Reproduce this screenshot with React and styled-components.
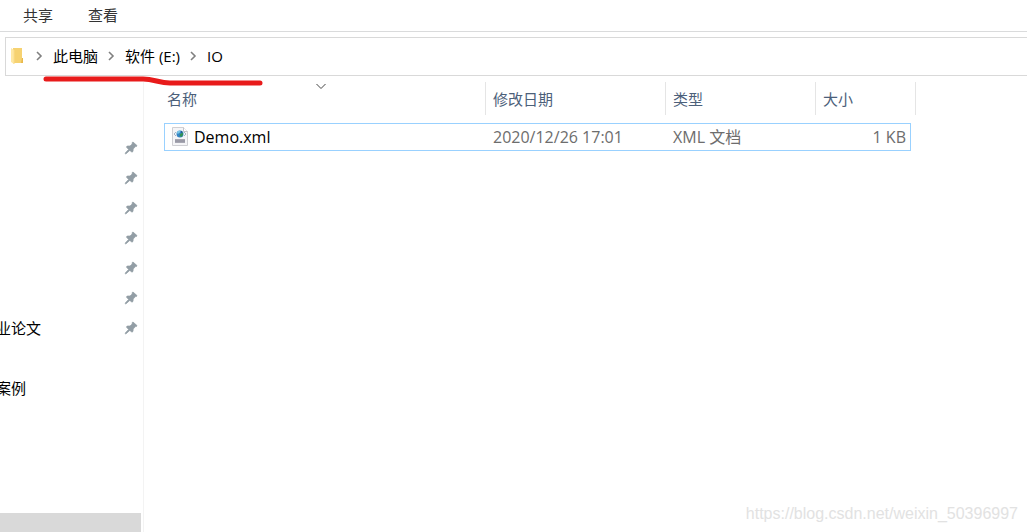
import React from 'react'
import styled, { createGlobalStyle } from 'styled-components'

const GlobalStyle = createGlobalStyle`
    * {
        box-sizing: border-box;
    }

    body {
        margin: 0;
        overflow: hidden;
        background-color: #fff;
        color: #000;
        font-family: "Open Sans", "Noto Sans CJK SC", sans-serif;
        font-size: 15px;
        line-height: 20px;
    }

    button {
        padding: 0;
        border: 0;
        background: none;
        color: inherit;
        font: inherit;
        cursor: pointer;
    }
`;

const Window = styled.div`
    position: relative;
    min-height: 100vh;
    display: flex;
    flex-direction: column;
`;

const Tabs = styled.nav`
    height: 32px;
    padding: 0 23px 2px;
    display: flex;
    align-items: center;
    gap: 35px;
    border-bottom: 1px solid #dadbdc;
    color: #333;
`;

const AddressBar = styled.nav`
    height: 39px;
    margin: 5px 0 0 5px;
    padding: 0 0 2px 4px;
    display: flex;
    align-items: center;
    border: 1px solid #d9d9d9;
    border-right: 0;
`;

const Crumb = styled.span`
    display: flex;
    align-items: center;

    svg {
        margin: 0 10px 0 9px;
    }
`;

const FolderIcon = styled.svg`
    margin-right: 2px;
`;

const Body = styled.div`
    flex: 1;
    display: flex;
    padding-top: 6px;
`;

const Sidebar = styled.aside`
    flex: none;
    width: 144px;
    padding: 51px 2px 0 0;
    display: flex;
    flex-direction: column;
    justify-content: space-between;
    border-right: 1px solid #f3f3f3;
    overflow: hidden;
`;

const PlaceList = styled.ul`
    margin: 0;
    padding: 0;
    list-style: none;
`;

const Place = styled.li`
    height: 30px;
    margin-left: -4px;
    padding-right: 3px;
    display: flex;
    align-items: center;
    justify-content: space-between;
    white-space: nowrap;
`;

const ScrollThumb = styled.div`
    height: 19px;
    background-color: #d9d9d9;
`;

const Files = styled.main`
    flex: 1;
    min-width: 0;
    padding-left: 20px;
`;

const FileTable = styled.table`
    display: block;
    width: 100%;
    max-width: 752px;
`;

const TableHead = styled.thead`
    display: block;
`;

const TableBody = styled.tbody`
    display: block;
    padding: 8px 5px 0 0;
`;

const HeadRow = styled.tr`
    display: grid;
    grid-template-columns: minmax(0, 1fr) 180px 150px 100px;
`;

const HeadCell = styled.th`
    position: relative;
    height: 33px;
    padding: 0 0 0 ${props => props.$first ? '3px' : '7px'};
    display: flex;
    align-items: center;
    border-right: 1px solid #e5e5e5;
    color: #4c607a;
    font-weight: 400;
`;

const SortArrow = styled.svg`
    position: absolute;
    top: 1px;
    left: 49%;
    transform: translateX(-50%);
`;

const FileRow = styled.tr`
    height: 28px;
    display: grid;
    grid-template-columns: minmax(0, 1fr) 180px 150px 94px;
    align-items: center;
    border: 1px solid #99d1ff;
`;

const Cell = styled.td`
    padding: 0 4px 0 7px;
    color: #6d6d6d;
    font-size: 16px;
    text-align: ${props => props.$align || 'left'};
    white-space: nowrap;
`;

const NameCell = styled(Cell)`
    display: flex;
    align-items: center;
    gap: 6px;
    padding-left: 6px;
    color: #000;
`;

const Marker = styled.svg`
    position: absolute;
    top: 74px;
    left: 42px;
    pointer-events: none;
`;

const Watermark = styled.div`
    position: absolute;
    right: 9px;
    bottom: 8px;
    color: #e2e2e2;
    font-family: "Liberation Sans", sans-serif;
    font-size: 16px;
`;

function Chevron() {
    return <svg width="8" height="10" viewBox="0 0 8 10" fill="none" stroke="#808080" strokeWidth="1.6">
        <path d="M2 1L6 5L2 9" />
    </svg>
}

function Folder() {
    return <FolderIcon width="14" height="18" viewBox="0 0 14 18">
        <path d="M3 1H12V11H13V16H3Z" fill="#f6d271" />
        <path d="M12 11H13V16H11Z" fill="#e8b84c" />
        <path d="M1 1L4 3V17L1 15Z" fill="#ffe8a3" />
        <path d="M4 3V17" stroke="#f9dc8a" />
    </FolderIcon>
}

function Pin() {
    return <svg width="14" height="14" viewBox="0 0 14 14">
        <path
            d="M9 1L13 4.6L12.5 5.5L11.4 5.6L9.2 8L9 10.4L8 11.2L5.8 9.4L1.8 13L1 12.3L4.6 8.4L2.4 6.1L3.2 5L6 5L8.2 3L8.2 1.5Z"
            fill="#929da5"
            stroke="#929da5"
            strokeWidth=".7"
            strokeLinejoin="round"
        />
    </svg>
}

function XmlFile() {
    return <svg width="17" height="20" viewBox="0 0 17 20">
        <path d="M1.5 .5H12.5L16.5 4.5V18.5H1.5Z" fill="#f5f5f7" stroke="#cfcfd3" />
        <path d="M12.5 .5V4.5H16.5" fill="#fff" stroke="#c4c4c9" />
        <path d="M5 5L3 7L5 9M13 5L15 7L13 9" fill="none" stroke="#a6b4c4" />
        <circle cx="9" cy="7" r="3.5" fill="#3584c5" />
        <path d="M6 5Q7.5 3 9.5 4L8.5 6L6.5 7Z" fill="#79c8e8" />
        <path d="M9 7L12 5.5Q12.5 8 10.5 10L8.5 9Z" fill="#329252" />
        <path d="M10 4L11.5 5L10 6Z" fill="#23477f" />
        <rect x="4" y="12" width="10" height="4" fill="#a7a7b2" />
        <path d="M4 14H14" stroke="#8c8c9a" />
    </svg>
}

const tabs = ['共享', '查看'];
const path = ['此电脑', '软件 (E:)', 'IO'];

const places = [
    { name: '', pinned: true },
    { name: '', pinned: true },
    { name: '', pinned: true },
    { name: '', pinned: true },
    { name: '', pinned: true },
    { name: '', pinned: true },
    { name: '业论文', pinned: true },
    { name: '', pinned: false },
    { name: '案例', pinned: false },
];

const files = [
    { name: 'Demo.xml', date: '2020/12/26 17:01', type: 'XML 文档', size: '1 KB' },
];

export default function App() {
    return <Window>
        <GlobalStyle />
        <Tabs>
            {tabs.map(tab => <button key={tab} type="button">{tab}</button>)}
        </Tabs>
        <AddressBar>
            <Folder />
            {path.map(part => <Crumb key={part}>
                <Chevron />
                <button type="button">{part}</button>
            </Crumb>)}
        </AddressBar>
        <Body>
            <Sidebar>
                <PlaceList>
                    {places.map((place, i) => <Place key={i}>
                        <span>{place.name}</span>
                        {place.pinned && <Pin />}
                    </Place>)}
                </PlaceList>
                <ScrollThumb />
            </Sidebar>
            <Files>
                <FileTable>
                    <TableHead>
                        <HeadRow>
                            <HeadCell $first>
                                名称
                                <SortArrow width="11" height="7" viewBox="0 0 11 7" fill="none" stroke="#444">
                                    <path d="M1 1L5.5 5.5L10 1" />
                                </SortArrow>
                            </HeadCell>
                            <HeadCell>修改日期</HeadCell>
                            <HeadCell>类型</HeadCell>
                            <HeadCell>大小</HeadCell>
                        </HeadRow>
                    </TableHead>
                    <TableBody>
                        {files.map(file => <FileRow key={file.name}>
                            <NameCell>
                                <XmlFile />
                                <span>{file.name}</span>
                            </NameCell>
                            <Cell>{file.date}</Cell>
                            <Cell>{file.type}</Cell>
                            <Cell $align="right">{file.size}</Cell>
                        </FileRow>)}
                    </TableBody>
                </FileTable>
            </Files>
        </Body>
        <Marker width="224" height="14" viewBox="0 0 224 14" fill="none" stroke="#e81b1b" strokeWidth="5" strokeLinecap="round">
            <path d="M4 5H101C112 5 117 9 128 9H218" />
        </Marker>
        <Watermark>https://blog.csdn.net/weixin_50396997</Watermark>
    </Window>
}
